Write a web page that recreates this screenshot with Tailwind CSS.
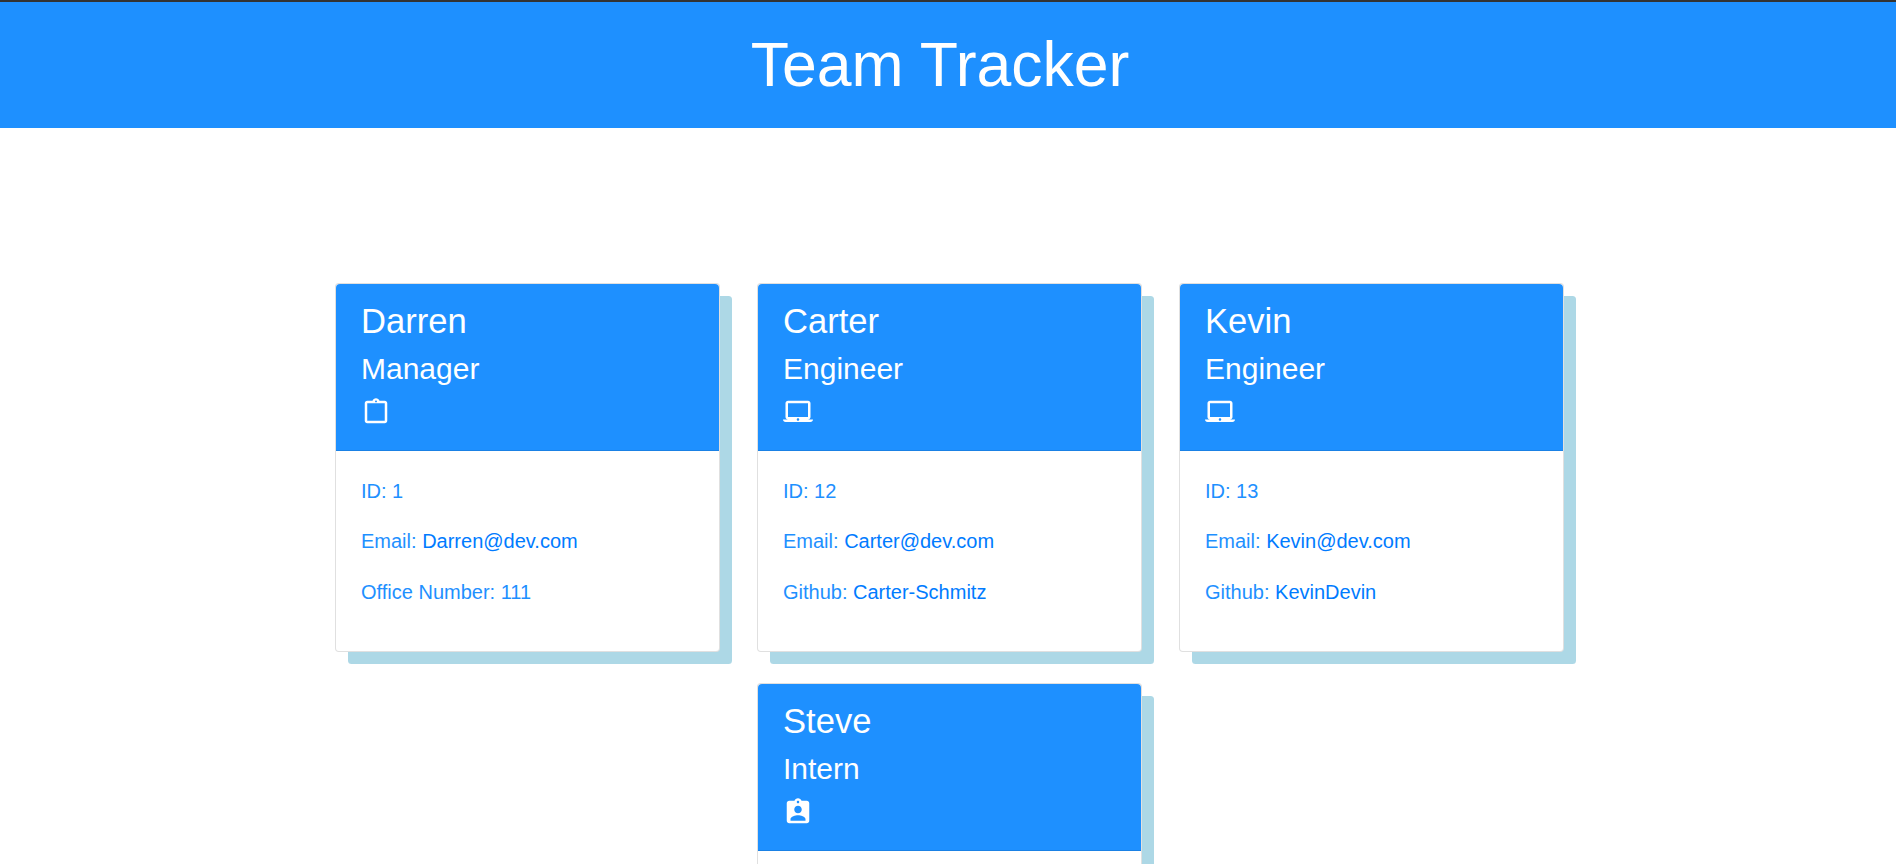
<!DOCTYPE html>
<html lang="en">
<head>
  <meta charset="UTF-8">
  <meta name="viewport" content="width=device-width, initial-scale=1.0">
  <title>Team Tracker</title>
  <script src="https://cdn.jsdelivr.net/npm/@tailwindcss/browser@4"></script>
</head>
<body class="bg-white h-screen overflow-hidden font-['Liberation_Sans',Arial,sans-serif]">
  <!-- Header -->
  <header class="h-[128px] bg-[#1e90ff] border-t-2 border-[#333] flex justify-center">
    <h1 class="text-white text-[62.5px] leading-[70px] pt-[27px] pr-[16px]">Team Tracker</h1>
  </header>

  <!-- Cards -->
  <main class="grid grid-cols-[repeat(3,385px)] gap-x-[37px] gap-y-[31px] justify-center pt-[155px] pl-[3px]">

    <div class="h-[369px] bg-white border border-black/12 rounded shadow-[12.5px_12.5px_0_-0.5px_#add8e6]">
      <div class="h-[167px] bg-[#1e90ff] border-b border-black/10 rounded-t px-[25px] pt-[17px] text-white">
        <h2 class="text-[34.6px] leading-[41px]">Darren</h2>
        <h3 class="text-[30px] leading-[36px] mt-[9px]">Manager</h3>
        <svg class="w-[30px] h-[30px] mt-[10px] fill-white" viewBox="0 0 24 24"><path d="M19 3h-4.18C14.4 1.84 13.3 1 12 1c-1.3 0-2.4.84-2.82 2H5c-1.1 0-2 .9-2 2v14c0 1.1.9 2 2 2h14c1.1 0 2-.9 2-2V5c0-1.1-.9-2-2-2zm-7-.25c.22 0 .41.1.55.25.12.13.2.31.2.5 0 .41-.34.75-.75.75s-.75-.34-.75-.75c0-.19.08-.37.2-.5.14-.15.33-.25.55-.25zM19 19H5V5h14v14z"/></svg>
      </div>
      <div class="px-[25px] pt-[26px] text-[20px] leading-[29px] text-[#1e90ff]">
        <p class="mb-[21.3px]">ID: 1</p>
        <p class="mb-[21.3px]">Email: <a href="#" class="text-[#007bff]">Darren@dev.com</a></p>
        <p class="mb-[21.3px]">Office Number: 111</p>
      </div>
    </div>

    <div class="h-[369px] bg-white border border-black/12 rounded shadow-[12.5px_12.5px_0_-0.5px_#add8e6]">
      <div class="h-[167px] bg-[#1e90ff] border-b border-black/10 rounded-t px-[25px] pt-[17px] text-white">
        <h2 class="text-[34.6px] leading-[41px]">Carter</h2>
        <h3 class="text-[30px] leading-[36px] mt-[9px]">Engineer</h3>
        <svg class="w-[30px] h-[30px] mt-[10px] fill-white" viewBox="0 0 24 24"><path d="M20 18c1.1 0 1.99-.9 1.99-2L22 5c0-1.1-.9-2-2-2H4c-1.1 0-2 .9-2 2v11c0 1.1.9 2 2 2H0c0 1.1.9 2 2 2h20c1.1 0 2-.9 2-2h-4zM4 5h16v11H4V5zm8 14c-.55 0-1-.45-1-1s.45-1 1-1 1 .45 1 1-.45 1-1 1z"/></svg>
      </div>
      <div class="px-[25px] pt-[26px] text-[20px] leading-[29px] text-[#1e90ff]">
        <p class="mb-[21.3px]">ID: 12</p>
        <p class="mb-[21.3px]">Email: <a href="#" class="text-[#007bff]">Carter@dev.com</a></p>
        <p class="mb-[21.3px]">Github: <a href="#" class="text-[#007bff]">Carter-Schmitz</a></p>
      </div>
    </div>

    <div class="h-[369px] bg-white border border-black/12 rounded shadow-[12.5px_12.5px_0_-0.5px_#add8e6]">
      <div class="h-[167px] bg-[#1e90ff] border-b border-black/10 rounded-t px-[25px] pt-[17px] text-white">
        <h2 class="text-[34.6px] leading-[41px]">Kevin</h2>
        <h3 class="text-[30px] leading-[36px] mt-[9px]">Engineer</h3>
        <svg class="w-[30px] h-[30px] mt-[10px] fill-white" viewBox="0 0 24 24"><path d="M20 18c1.1 0 1.99-.9 1.99-2L22 5c0-1.1-.9-2-2-2H4c-1.1 0-2 .9-2 2v11c0 1.1.9 2 2 2H0c0 1.1.9 2 2 2h20c1.1 0 2-.9 2-2h-4zM4 5h16v11H4V5zm8 14c-.55 0-1-.45-1-1s.45-1 1-1 1 .45 1 1-.45 1-1 1z"/></svg>
      </div>
      <div class="px-[25px] pt-[26px] text-[20px] leading-[29px] text-[#1e90ff]">
        <p class="mb-[21.3px]">ID: 13</p>
        <p class="mb-[21.3px]">Email: <a href="#" class="text-[#007bff]">Kevin@dev.com</a></p>
        <p class="mb-[21.3px]">Github: <a href="#" class="text-[#007bff]">KevinDevin</a></p>
      </div>
    </div>

    <div class="col-start-2 h-[369px] bg-white border border-black/12 rounded shadow-[12.5px_12.5px_0_-0.5px_#add8e6]">
      <div class="h-[167px] bg-[#1e90ff] border-b border-black/10 rounded-t px-[25px] pt-[17px] text-white">
        <h2 class="text-[34.6px] leading-[41px]">Steve</h2>
        <h3 class="text-[30px] leading-[36px] mt-[9px]">Intern</h3>
        <svg class="w-[30px] h-[30px] mt-[10px] fill-white" viewBox="0 0 24 24"><path d="M19 3h-4.18C14.4 1.84 13.3 1 12 1c-1.3 0-2.4.84-2.82 2H5c-1.1 0-2 .9-2 2v14c0 1.1.9 2 2 2h14c1.1 0 2-.9 2-2V5c0-1.1-.9-2-2-2zm-7 0c.55 0 1 .45 1 1s-.45 1-1 1-1-.45-1-1 .45-1 1-1zm0 4c1.66 0 3 1.34 3 3s-1.34 3-3 3-3-1.34-3-3 1.34-3 3-3zm6 12H6v-1.4c0-2 4-3.1 6-3.1s6 1.1 6 3.1V19z"/></svg>
      </div>
    </div>

  </main>
</body>
</html>
